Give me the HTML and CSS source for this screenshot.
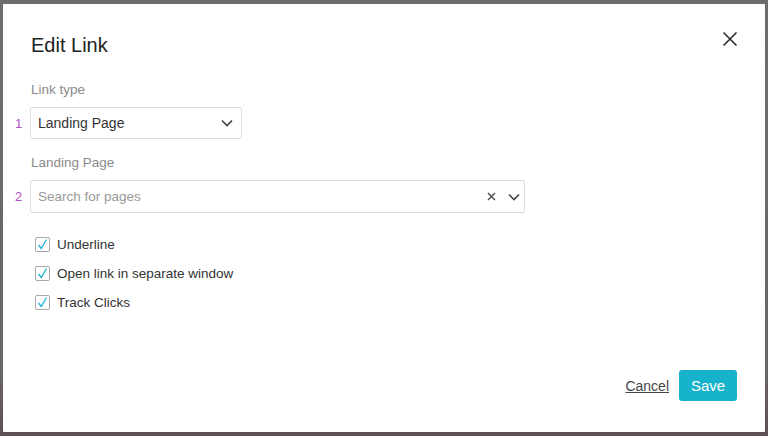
FILE: index.html
```html
<!DOCTYPE html>
<html>
<head>
<meta charset="utf-8">
<link rel="stylesheet" href="styles.css">
</head>
<body>
<div class="modal">
  <div class="header">
    <h1 class="title">Edit Link</h1>
    <button class="close" aria-label="Close">
      <svg width="16" height="16" viewBox="0 0 16 16"><path d="M1.5 1.5L14.5 14.5M14.5 1.5L1.5 14.5" stroke="#2b2b2b" stroke-width="1.6" fill="none"/></svg>
    </button>
  </div>
  <div class="body">
    <div class="label">Link type</div>
    <div class="field-row">
      <span class="num">1</span>
      <div class="select">
        <span class="value">Landing Page</span>
        <svg class="chev" width="12" height="8" viewBox="0 0 12 8"><path d="M1 1.5L6 6.5L11 1.5" stroke="#444" stroke-width="1.6" fill="none"/></svg>
      </div>
    </div>
    <div class="label">Landing Page</div>
    <div class="field-row">
      <span class="num">2</span>
      <div class="select wide">
        <span class="placeholder">Search for pages</span>
        <svg class="clear" width="9" height="9" viewBox="0 0 9 9"><path d="M1 1L8 8M8 1L1 8" stroke="#555" stroke-width="1.5" fill="none"/></svg>
        <svg class="chev" width="12" height="8" viewBox="0 0 12 8"><path d="M1 1.5L6 6.5L11 1.5" stroke="#444" stroke-width="1.6" fill="none"/></svg>
      </div>
    </div>
    <div class="checks">
      <label class="check"><span class="box"><svg width="13" height="13" viewBox="0 0 13 13"><path d="M2.5 7L5.2 10.5L10.5 1.5" stroke="#1fb4d2" stroke-width="1.3" fill="none"/></svg></span>Underline</label>
      <label class="check"><span class="box"><svg width="13" height="13" viewBox="0 0 13 13"><path d="M2.5 7L5.2 10.5L10.5 1.5" stroke="#1fb4d2" stroke-width="1.3" fill="none"/></svg></span>Open link in separate window</label>
      <label class="check"><span class="box"><svg width="13" height="13" viewBox="0 0 13 13"><path d="M2.5 7L5.2 10.5L10.5 1.5" stroke="#1fb4d2" stroke-width="1.3" fill="none"/></svg></span>Track Clicks</label>
    </div>
  </div>
  <div class="footer">
    <a class="cancel" href="#">Cancel</a>
    <button class="save">Save</button>
  </div>
</div>
</body>
</html>
```
FILE: styles.css
```css
html, body {
  margin: 0;
  height: 100%;
}
body {
  background: linear-gradient(180deg, #6e6c6c 0%, #6a6768 85%, #5e4e55 100%);
  padding: 4px 3px 4px 3px;
  box-sizing: border-box;
  font-family: "Liberation Sans", Arial, sans-serif;
  overflow: hidden;
}
.modal {
  background: #fff;
  height: 100%;
  display: flex;
  flex-direction: column;
  padding: 0 28px 0 27px;
  box-sizing: border-box;
  border-radius: 1px;
}
.header {
  display: flex;
  justify-content: space-between;
  align-items: flex-start;
  padding-top: 29px;
}
.title {
  margin: 0;
  font-size: 20px;
  font-weight: normal;
  color: #222;
  line-height: 24px;
  padding-left: 1px;
}
.close {
  border: 0;
  background: none;
  padding: 0;
  margin-top: -2px;
  margin-right: -1px;
  width: 16px;
  height: 16px;
  cursor: pointer;
}
.close svg { display: block; }
.body {
  flex: 1;
  padding-top: 25px;
}
.label {
  font-size: 13.5px;
  color: #8a8a8a;
  line-height: 16px;
  padding-left: 1px;
  margin-bottom: 9px;
}
.field-row {
  display: flex;
  align-items: center;
  margin-left: -15px;
  margin-bottom: 16px;
}
.num {
  width: 15px;
  font-size: 13px;
  color: #b04ec4;
  box-sizing: border-box;
}
.select {
  width: 212px;
  height: 32px;
  box-sizing: border-box;
  border: 1px solid #dcdcdc;
  border-radius: 2px;
  display: flex;
  align-items: center;
  padding: 0 8px 0 7px;
  font-size: 14px;
  color: #333;
}
.select.wide { width: 495px; height: 33px; padding-right: 4px; }
.value, .placeholder { flex: 1; }
.placeholder { color: #999; font-size: 13.5px; }
.chev { display: block; }
.clear { display: block; margin-right: 12px; }
.checks {
  display: flex;
  flex-direction: column;
  gap: 12px;
  padding-top: 7px;
  padding-left: 5px;
}
.check {
  display: flex;
  align-items: center;
  font-size: 13.5px;
  color: #333;
  line-height: 17px;
}
.box {
  width: 15px;
  height: 15px;
  box-sizing: border-box;
  border: 1px solid #a9a9a9;
  border-radius: 2px;
  margin-right: 7px;
  display: flex;
  align-items: center;
  justify-content: center;
}
.box svg { display: block; }
.footer {
  display: flex;
  justify-content: flex-end;
  align-items: center;
  gap: 10px;
  padding-bottom: 31px;
}
.cancel {
  color: #444;
  font-size: 14px;
  text-decoration: underline;
}
.save {
  background: #17b3cd;
  color: #fff;
  border: 0;
  border-radius: 3px;
  width: 58px;
  height: 31px;
  font-family: inherit;
  font-size: 15px;
  padding: 0;
  cursor: pointer;
}
```
